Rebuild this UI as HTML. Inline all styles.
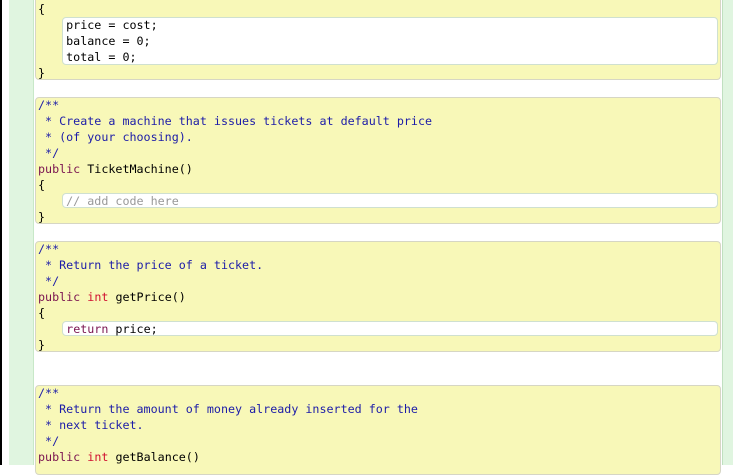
<!DOCTYPE html>
<html><head><style>
*{margin:0;padding:0;box-sizing:border-box}
body{width:733px;height:465px;overflow:hidden;background:#fff;position:relative;font-family:"DejaVu Sans Mono","Liberation Mono",monospace;font-size:11.7px;color:#000}
.bl{position:absolute;left:0;top:0;width:2px;height:465px;background:#000}
.gl{position:absolute;left:9px;top:0;width:25px;height:465px;background:#e0f5e0;border-right:1px solid #c8e8c8}
.gr{position:absolute;left:722px;top:0;width:11px;height:465px;background:#e0f5e0;border-left:1px solid #c0e0c0}
.y{position:absolute;left:35px;width:686px;background:#f8f8b8;border:1px solid #d6d6c4;border-radius:4px}
.w{position:absolute;left:62px;width:656px;background:#fff;border:1px solid #cfe0d0;border-radius:4px}
.l{position:absolute;left:38px;line-height:16px;height:16px;white-space:pre;margin-top:1px}
.c{color:#1c1ca8}.k{color:#7a1450}.i{color:#d01030}.g{color:#999}
</style></head><body>
<div class="bl"></div><div class="gl"></div><div class="gr"></div>
<div class="y" style="top:-6px;height:86px"></div>
<div class="w" style="top:17px;height:48px"></div>
<div class="y" style="top:97px;height:127px"></div>
<div class="w" style="top:193px;height:15px"></div>
<div class="y" style="top:241px;height:111px"></div>
<div class="w" style="top:321px;height:15px"></div>
<div class="y" style="top:385px;height:90px"></div>

<div class="l" style="top:0">{</div>
<div class="l" style="top:16px">    price = cost;</div>
<div class="l" style="top:32px">    balance = 0;</div>
<div class="l" style="top:48px">    total = 0;</div>
<div class="l" style="top:64px">}</div>

<div class="l c" style="top:96px">/**</div>
<div class="l c" style="top:112px"> * Create a machine that issues tickets at default price</div>
<div class="l c" style="top:128px"> * (of your choosing).</div>
<div class="l c" style="top:144px"> */</div>
<div class="l" style="top:160px"><span class="k">public</span> TicketMachine()</div>
<div class="l" style="top:176px">{</div>
<div class="l g" style="top:192px">    // add code here</div>
<div class="l" style="top:208px">}</div>

<div class="l c" style="top:240px">/**</div>
<div class="l c" style="top:256px"> * Return the price of a ticket.</div>
<div class="l c" style="top:272px"> */</div>
<div class="l" style="top:288px"><span class="k">public</span> <span class="i">int</span> getPrice()</div>
<div class="l" style="top:304px">{</div>
<div class="l" style="top:320px">    <span class="k">return</span> price;</div>
<div class="l" style="top:336px">}</div>

<div class="l c" style="top:384px">/**</div>
<div class="l c" style="top:400px"> * Return the amount of money already inserted for the</div>
<div class="l c" style="top:416px"> * next ticket.</div>
<div class="l c" style="top:432px"> */</div>
<div class="l" style="top:448px"><span class="k">public</span> <span class="i">int</span> getBalance()</div>
</body></html>
